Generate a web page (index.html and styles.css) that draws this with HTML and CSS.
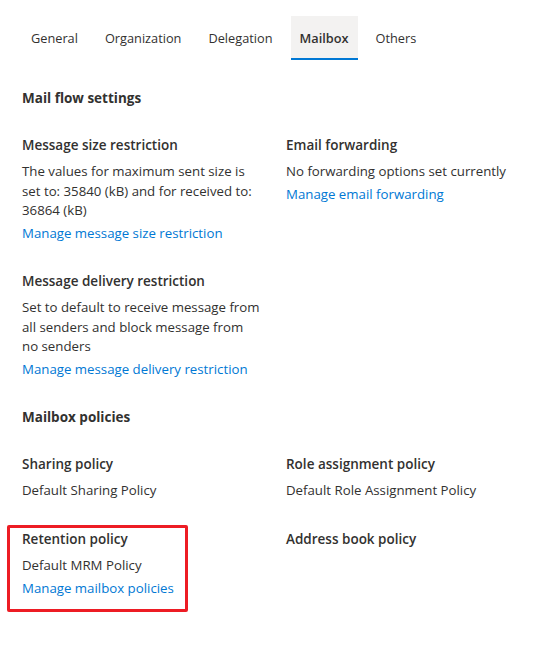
FILE: index.html
```html
<!DOCTYPE html>
<html>
<head>
<meta charset="utf-8">
<link rel="stylesheet" href="styles.css">
</head>
<body>
<div class="page">
  <nav class="tabs">
    <div class="tab">General</div>
    <div class="tab">Organization</div>
    <div class="tab">Delegation</div>
    <div class="tab active">Mailbox</div>
    <div class="tab">Others</div>
  </nav>

  <h2 class="group">Mail flow settings</h2>
  <div class="grid">
    <div class="cell">
      <h3 class="title">Message size restriction</h3>
      <p class="text">The values for maximum sent size is set to: 35840 (kB) and for received to: 36864 (kB)</p>
      <a class="link">Manage message size restriction</a>
    </div>
    <div class="cell">
      <h3 class="title">Email forwarding</h3>
      <p class="text">No forwarding options set currently</p>
      <a class="link">Manage email forwarding</a>
    </div>
    <div class="cell">
      <h3 class="title">Message delivery restriction</h3>
      <p class="text">Set to default to receive message from all senders and block message from no senders</p>
      <a class="link">Manage message delivery restriction</a>
    </div>
    <div class="cell"></div>
  </div>

  <h2 class="group">Mailbox policies</h2>
  <div class="grid">
    <div class="cell">
      <h3 class="title">Sharing policy</h3>
      <p class="text">Default Sharing Policy</p>
    </div>
    <div class="cell">
      <h3 class="title">Role assignment policy</h3>
      <p class="text">Default Role Assignment Policy</p>
    </div>
    <div class="cell highlight">
      <h3 class="title">Retention policy</h3>
      <p class="text">Default MRM Policy</p>
      <a class="link">Manage mailbox policies</a>
    </div>
    <div class="cell">
      <h3 class="title">Address book policy</h3>
    </div>
  </div>
</div>
</body>
</html>
```

FILE: styles.css
```css
* { box-sizing: border-box; }
html, body { margin: 0; padding: 0; background: #ffffff; }
body {
  font-family: "Open Sans", "Noto Sans", sans-serif;
  font-size: 13.25px;
  color: #323130;
}
.page { padding: 16px 22px 45px 22px; }
.tabs {
  display: flex;
  gap: 9px;
  height: 44px;
}
.tab {
  display: flex;
  align-items: center;
  padding: 0 9px;
  height: 44px;
  color: #323130;
  font-size: 12.75px;
}
.tab.active {
  background: #f3f2f1;
  border-bottom: 2px solid #0078d4;
  padding-top: 2px;
  font-weight: 600;
}
.group {
  margin: 28px 0 27px 0;
  font-size: 13.5px;
  font-weight: 700;
  line-height: 20px;
}
.grid {
  display: grid;
  grid-template-columns: 238px 1fr;
  column-gap: 26px;
  row-gap: 28px;
}
.cell { display: flex; flex-direction: column; align-items: flex-start; }
.title {
  margin: 0 0 7px 0;
  font-size: 13.5px;
  font-weight: 600;
  line-height: 20px;
}
.text {
  margin: 0;
  line-height: 19.5px;
}
.link {
  margin-top: 2.5px;
  color: #0078d4;
  line-height: 20px;
  cursor: pointer;
}
.highlight {
  width: 181px;
  margin: -4px 0 -14px -15px;
  padding: 1px 0 11px 12px;
  border: 3px solid #ed1c24;
  border-radius: 2px;
}
```
